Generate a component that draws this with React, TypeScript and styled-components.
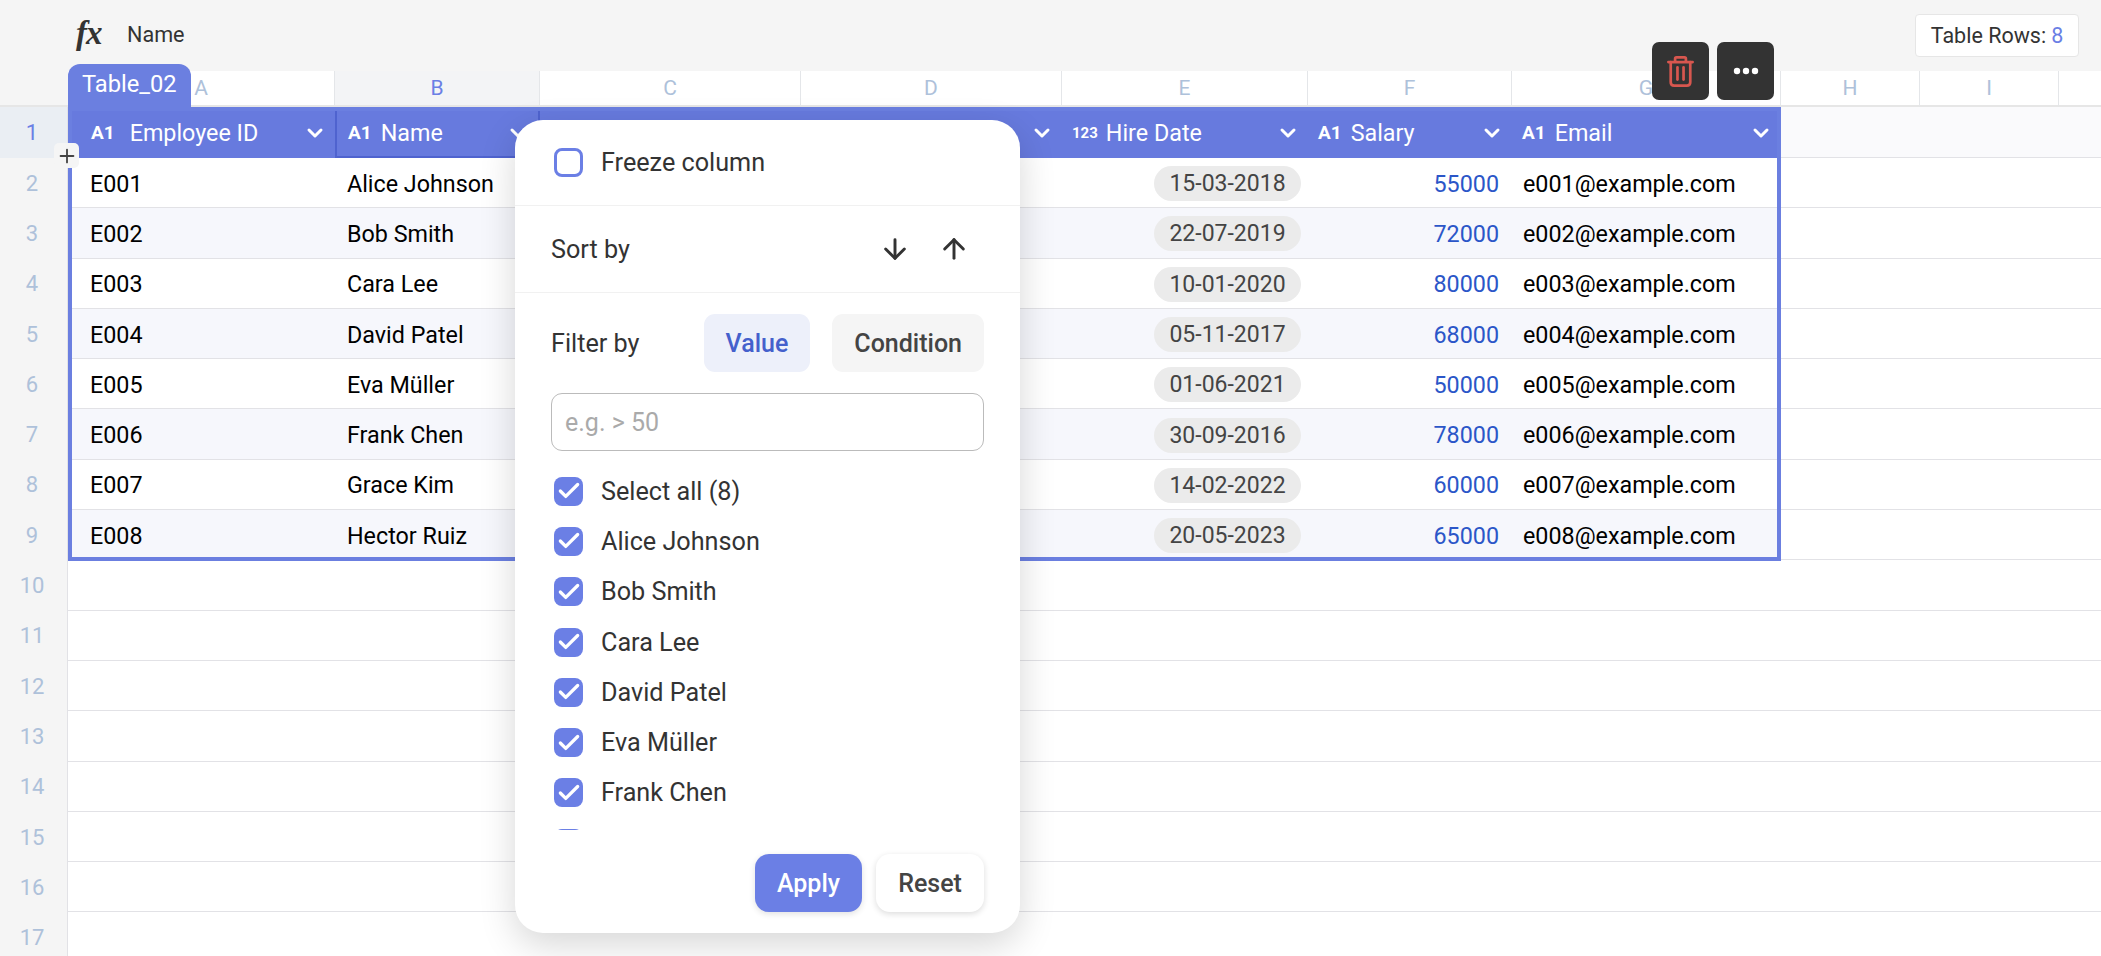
import styled, { createGlobalStyle } from 'styled-components';
import { ArrowDown, ArrowUp, Check, ChevronDown, Plus } from 'lucide-react';

const GlobalStyle = createGlobalStyle`
  html, body {
    margin: 0;
    padding: 0;
    background: #fff;
    font-family: Roboto, "Liberation Sans", sans-serif;
  }
  * { box-sizing: border-box; }
`;

const columns = [
  { letter: 'A', type: 'A1', title: 'Employee ID' },
  { letter: 'B', type: 'A1', title: 'Name' },
  { letter: 'C', type: '', title: '' },
  { letter: 'D', type: '', title: '' },
  { letter: 'E', type: '123', title: 'Hire Date' },
  { letter: 'F', type: 'A1', title: 'Salary' },
  { letter: 'G', type: 'A1', title: 'Email' },
];

const rows = [
  ['E001', 'Alice Johnson', '15-03-2018', '55000', 'e001@example.com'],
  ['E002', 'Bob Smith', '22-07-2019', '72000', 'e002@example.com'],
  ['E003', 'Cara Lee', '10-01-2020', '80000', 'e003@example.com'],
  ['E004', 'David Patel', '05-11-2017', '68000', 'e004@example.com'],
  ['E005', 'Eva Müller', '01-06-2021', '50000', 'e005@example.com'],
  ['E006', 'Frank Chen', '30-09-2016', '78000', 'e006@example.com'],
  ['E007', 'Grace Kim', '14-02-2022', '60000', 'e007@example.com'],
  ['E008', 'Hector Ruiz', '20-05-2023', '65000', 'e008@example.com'],
];

const names = ['Select all (8)', ...rows.map((r) => r[1])];
const emptyRows = [10, 11, 12, 13, 14, 15, 16, 17];

const TrashIcon = () => (
  <svg width="27" height="31" viewBox="0 0 80 92" fill="none" stroke="#d8574f" strokeWidth="8" strokeLinecap="round" strokeLinejoin="round">
    <path d="M4 18H76" />
    <path d="M24 17V8Q24 4 28 4H52Q56 4 56 8V17" />
    <path d="M11 18V78Q11 88 21 88H59Q69 88 69 78V18" />
    <path d="M31 34V70" />
    <path d="M49 34V70" />
  </svg>
);

const App = () => {
  return (
    <Page>
      <GlobalStyle />
      <TopBar>
        <FormulaIcon>fx</FormulaIcon>
        <FormulaText>Name</FormulaText>
        <RowsBadge>
          Table Rows: <RowsCount>8</RowsCount>
        </RowsBadge>
      </TopBar>

      <Sheet>
        <Corner />
        {columns.map((c) => (
          <ColLetter key={c.letter} $active={c.letter === 'B'}>{c.letter}</ColLetter>
        ))}
        <ColLetter>H</ColLetter>
        <ColLetter>I</ColLetter>
        <LastLetter />

        <RowNum $active>1</RowNum>
        {columns.map((c) => (
          <HeaderCell key={c.letter} $selected={c.letter === 'B'} $first={c.letter === 'A'}>
            <TypeTag $small={c.type === '123'} $first={c.letter === 'A'}>{c.type}</TypeTag>
            <HeaderTitle>{c.title}</HeaderTitle>
            <HeaderChevron size={24} strokeWidth={3} />
          </HeaderCell>
        ))}
        <FillCell $tint />
        <FillCell $tint />
        <FillCell $tint />

        {rows.map((r, i) => (
          <DataRow key={r[0]}>
            <RowNum>{i + 2}</RowNum>
            <Cell $striped={i % 2 === 1} $first>{r[0]}</Cell>
            <Cell $striped={i % 2 === 1}>{r[1]}</Cell>
            <Cell $striped={i % 2 === 1} />
            <Cell $striped={i % 2 === 1} />
            <Cell $striped={i % 2 === 1} $align="right" $tight>
              <DatePill>{r[2]}</DatePill>
            </Cell>
            <Cell $striped={i % 2 === 1} $align="right" $number>{r[3]}</Cell>
            <Cell $striped={i % 2 === 1} $mail>{r[4]}</Cell>
            <FillCell />
            <FillCell />
            <FillCell />
          </DataRow>
        ))}

        {emptyRows.map((n) => (
          <DataRow key={n}>
            <RowNum>{n}</RowNum>
            <EmptyRow />
          </DataRow>
        ))}
      </Sheet>

      <SelectionFrame />
      <TableTab>Table_02</TableTab>
      <AddButton>
        <Plus size={22} strokeWidth={2} />
      </AddButton>
      <ToolButtons>
        <ToolButton>
          <TrashIcon />
        </ToolButton>
        <ToolButton>
          <svg width="26" height="8" viewBox="0 0 26 8" fill="#fff">
            <circle cx="4" cy="4" r="3.2" />
            <circle cx="13" cy="4" r="3.2" />
            <circle cx="22" cy="4" r="3.2" />
          </svg>
        </ToolButton>
      </ToolButtons>

      <Popup>
        <FreezeSection>
          <EmptyBox />
          <ItemLabel>Freeze column</ItemLabel>
        </FreezeSection>
        <SortSection>
          <SectionLabel>Sort by</SectionLabel>
          <SortIcons>
            <ArrowDown size={32} strokeWidth={2.2} />
            <ArrowUp size={32} strokeWidth={2.2} />
          </SortIcons>
        </SortSection>
        <FilterSection>
          <FilterHead>
            <SectionLabel>Filter by</SectionLabel>
            <FilterTab $active>Value</FilterTab>
            <FilterTab>Condition</FilterTab>
          </FilterHead>
          <FilterInput placeholder="e.g. > 50" />
        </FilterSection>
        <NameList>
          {names.map((n) => (
            <NameItem key={n}>
              <CheckedBox>
                <Check size={26} strokeWidth={3} color="#fff" />
              </CheckedBox>
              <ItemLabel>{n}</ItemLabel>
            </NameItem>
          ))}
        </NameList>
        <PopupFooter>
          <ApplyButton>Apply</ApplyButton>
          <ResetButton>Reset</ResetButton>
        </PopupFooter>
      </Popup>
    </Page>
  );
};

export default App;

const Page = styled.div`
  position: relative;
  width: 2101px;
  height: 956px;
  overflow: hidden;
  background: #fff;
`;

const TopBar = styled.div`
  height: 71px;
  background: #f5f5f5;
  display: flex;
  align-items: center;
  padding: 0 22px 0 76px;
`;

const FormulaIcon = styled.div`
  width: 51px;
  margin-top: -4px;
  font-family: "Liberation Serif", serif;
  font-style: italic;
  font-weight: 700;
  font-size: 33px;
  letter-spacing: -1px;
  color: #333;
`;

const FormulaText = styled.div`
  margin-top: -2px;
  font-size: 21.6px;
  color: #333;
`;

const RowsBadge = styled.div`
  margin-left: auto;
  height: 43px;
  width: 164px;
  background: #fff;
  border: 1px solid #e6e6e6;
  border-radius: 4px;
  display: flex;
  align-items: center;
  justify-content: center;
  gap: 5px;
  font-size: 21.5px;
  color: #333;
`;

const RowsCount = styled.span`
  color: #6b7fe5;
`;

const Sheet = styled.div`
  display: grid;
  grid-template-columns: 68px 267px 205px 261px 261px 246px 204px 269px 139px 139px 1fr;
  grid-template-rows: 36px 51px;
  grid-auto-rows: 50.3px;
`;

const DataRow = styled.div`
  display: contents;
`;

const Corner = styled.div`
  background: #f5f5f5;
  border-bottom: 2px solid #e6e6e6;
`;

const ColLetter = styled.div<{ $active?: boolean }>`
  display: flex;
  align-items: center;
  justify-content: center;
  font-size: 21px;
  background: ${(p) => (p.$active ? '#f3f4f6' : '#fff')};
  color: ${(p) => (p.$active ? '#6b7fe5' : '#aec1da')};
  border-right: 1px solid #e4e6e9;
  border-bottom: 2px solid #e6e6e6;
`;

const LastLetter = styled(ColLetter)`
  border-right: none;
`;

const RowNum = styled.div<{ $active?: boolean }>`
  display: flex;
  align-items: center;
  justify-content: center;
  padding-right: 3px;
  font-size: 22px;
  background: ${(p) => (p.$active ? '#eaeef3' : '#f5f5f5')};
  color: ${(p) => (p.$active ? '#6b7fe5' : '#aec1da')};
  border-right: 1px solid #e2e2e6;
`;

const HeaderCell = styled.div<{ $selected?: boolean; $first?: boolean }>`
  display: flex;
  align-items: center;
  background: #677ade;
  color: #fff;
  padding: 0 8px 0 ${(p) => (p.$first ? '23px' : p.$selected ? '11px' : '10px')};
  font-size: 23.3px;
  border: ${(p) => (p.$selected ? '2px solid #4f63cf' : 'none')};
`;

const TypeTag = styled.span<{ $small?: boolean; $first?: boolean }>`
  font-weight: 700;
  font-size: ${(p) => (p.$small ? '15px' : '19px')};
  margin-right: ${(p) => (p.$first ? '15px' : p.$small ? '8px' : '9px')};
  white-space: nowrap;
`;

const HeaderTitle = styled.span`
  flex: 1;
  white-space: nowrap;
`;

const HeaderChevron = styled(ChevronDown)`
  flex: none;
`;

const Cell = styled.div<{ $striped?: boolean; $first?: boolean; $align?: string; $number?: boolean; $tight?: boolean; $mail?: boolean }>`
  display: flex;
  align-items: center;
  justify-content: ${(p) => (p.$align === 'right' ? 'flex-end' : 'flex-start')};
  padding: 2px ${(p) => (p.$tight ? '7px' : '13px')} 0 ${(p) => (p.$first ? '22px' : p.$mail ? '11px' : '12px')};
  font-size: 23.3px;
  color: ${(p) => (p.$number ? '#2b56c8' : '#000')};
  background: ${(p) => (p.$striped ? '#f6f7fc' : '#fff')};
  border-bottom: 1px solid #e2e2e6;
`;

const FillCell = styled.div<{ $tint?: boolean }>`
  background: ${(p) => (p.$tint ? '#fafafc' : '#fff')};
  border-bottom: 1px solid #e2e2e6;
`;

const EmptyRow = styled.div`
  grid-column: 2 / -1;
  background: #fff;
  border-bottom: 1px solid #e2e2e6;
`;

const DatePill = styled.span`
  height: 35px;
  width: 147px;
  border-radius: 18px;
  background: #ebebeb;
  color: #444;
  font-size: 23px;
  display: flex;
  align-items: center;
  justify-content: center;
`;

const SelectionFrame = styled.div`
  position: absolute;
  left: 68px;
  top: 107px;
  width: 1713px;
  height: 454px;
  border: 4px solid #6b7fe0;
  pointer-events: none;
`;

const TableTab = styled.div`
  position: absolute;
  left: 68px;
  top: 64px;
  width: 123px;
  height: 44px;
  padding: 6px 0 0 14px;
  border-radius: 12px 12px 0 0;
  background: #6b7fe0;
  color: #fff;
  font-size: 23.7px;
`;

const AddButton = styled.div`
  position: absolute;
  left: 54px;
  top: 143px;
  width: 25px;
  height: 25px;
  border-radius: 5px;
  background: #f5f5f5;
  color: #444;
  display: flex;
  align-items: center;
  justify-content: center;
`;

const ToolButtons = styled.div`
  position: absolute;
  left: 1652px;
  top: 42px;
  display: flex;
  gap: 8px;
`;

const ToolButton = styled.div`
  width: 57px;
  height: 58px;
  border-radius: 7px;
  background: #333;
  display: flex;
  align-items: center;
  justify-content: center;
`;

const Popup = styled.div`
  position: absolute;
  left: 515px;
  top: 120px;
  width: 505px;
  height: 813px;
  border-radius: 28px;
  background: #fff;
  box-shadow: 0 12px 36px rgba(0, 0, 0, 0.16);
  display: flex;
  flex-direction: column;
  color: #333;
`;

const FreezeSection = styled.div`
  height: 86px;
  flex: none;
  display: flex;
  align-items: center;
  gap: 18px;
  padding-left: 39px;
  border-bottom: 1px solid #f1f1f1;
`;

const SortSection = styled.div`
  height: 87px;
  flex: none;
  display: flex;
  align-items: center;
  justify-content: space-between;
  padding: 0 50px 0 36px;
  border-bottom: 1px solid #f1f1f1;
`;

const SectionLabel = styled.div`
  font-size: 25.2px;
`;

const SortIcons = styled.div`
  display: flex;
  gap: 27px;
  color: #333;
`;

const FilterSection = styled.div`
  padding: 21px 36px 0 36px;
  flex: none;
`;

const FilterHead = styled.div`
  display: flex;
  align-items: center;
  gap: 22px;
  margin-bottom: 21px;

  ${SectionLabel} {
    margin-right: auto;
  }
`;

const FilterTab = styled.div<{ $active?: boolean }>`
  height: 58px;
  padding: 0 22px;
  border-radius: 11px;
  display: flex;
  align-items: center;
  font-size: 25px;
  font-weight: 500;
  background: ${(p) => (p.$active ? '#edf0fa' : '#f5f5f5')};
  color: ${(p) => (p.$active ? '#4460cc' : '#444')};
`;

const FilterInput = styled.input`
  display: block;
  width: 100%;
  height: 58px;
  padding: 0 13px;
  border: 1px solid #bbb;
  border-radius: 11px;
  outline: none;
  font-family: inherit;
  font-size: 25px;
  color: #333;

  &::placeholder {
    color: #aaa;
  }
`;

const NameList = styled.div`
  margin-top: 15px;
  height: 364px;
  flex: none;
  overflow: hidden;
  padding-left: 39px;
`;

const NameItem = styled.div`
  height: 50.3px;
  display: flex;
  align-items: center;
  gap: 18px;
`;

const EmptyBox = styled.div`
  width: 29px;
  height: 29px;
  border: 3px solid #6b7fe5;
  border-radius: 8px;
  background: #fff;
`;

const CheckedBox = styled.div`
  width: 29px;
  height: 29px;
  border-radius: 8px;
  background: #6b7fe5;
  display: flex;
  align-items: center;
  justify-content: center;
`;

const ItemLabel = styled.div`
  font-size: 25.2px;
`;

const PopupFooter = styled.div`
  margin-top: 24px;
  padding-right: 36px;
  display: flex;
  justify-content: flex-end;
  gap: 14px;
`;

const ApplyButton = styled.button`
  width: 107px;
  height: 58px;
  border: none;
  border-radius: 14px;
  background: #6b7fe5;
  color: #fff;
  font-family: inherit;
  font-size: 25px;
  font-weight: 500;
  box-shadow: 0 2px 6px rgba(0, 0, 0, 0.12);
`;

const ResetButton = styled.button`
  width: 108px;
  height: 58px;
  border: none;
  border-radius: 14px;
  background: #fff;
  color: #444;
  font-family: inherit;
  font-size: 25px;
  font-weight: 500;
  box-shadow: 0 2px 6px rgba(0, 0, 0, 0.14);
`;
